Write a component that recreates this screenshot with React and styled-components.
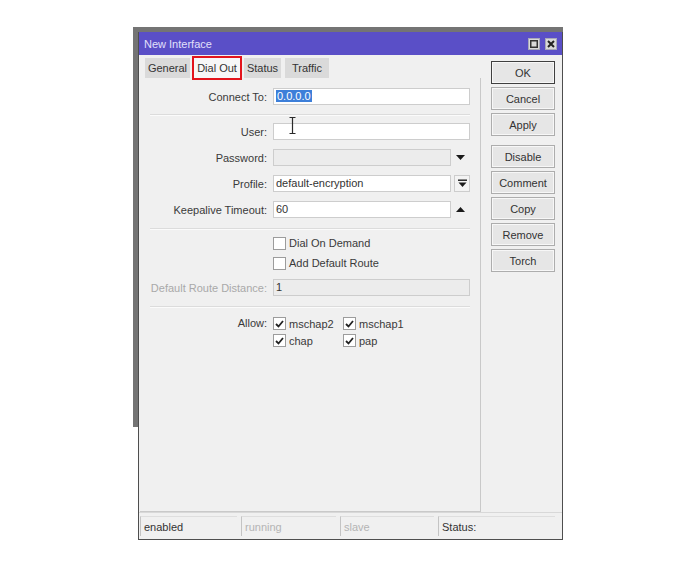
import styled, { createGlobalStyle } from "styled-components";

const GlobalStyle = createGlobalStyle`
  html, body {
    margin: 0;
    padding: 0;
    background: #fff;
  }
  body {
    font-family: "Liberation Sans", Arial, sans-serif;
    font-size: 11px;
    color: #333;
  }
`;

const Stage = styled.div`
  padding: 27px 0 0 133px;
`;

const Backdrop = styled.div`
  width: 430px;
  box-sizing: border-box;
  padding: 5px 0 0 5px;
  background: linear-gradient(#747474 0, #747474 400px, transparent 400px);
`;

const Window = styled.div`
  width: 425px;
  height: 508px;
  box-sizing: border-box;
  border: 1px solid #4e4e4e;
  border-top: none;
  background: #f0f0f0;
  display: flex;
  flex-direction: column;
`;

const TitleBar = styled.div`
  height: 23px;
  background: #5a4fc7;
  display: flex;
  align-items: center;
  padding: 0 5px 0 5px;
  color: #e2e0fb;
`;

const Title = styled.span`
  flex: 1;
`;

const TitleBtn = styled.span`
  width: 12px;
  height: 12px;
  box-sizing: border-box;
  margin-left: 5px;
  background: #d9d9d9;
  border: 1px solid #a8a8b8;
  display: flex;
  align-items: center;
  justify-content: center;
`;

const Body = styled.div`
  height: 457px;
  display: flex;
  padding-top: 3px;
  box-sizing: border-box;
`;

const Main = styled.div`
  width: 341px;
  margin-left: 1px;
  display: flex;
  flex-direction: column;
`;

const Tabs = styled.div`
  height: 20px;
  display: flex;
  gap: 4px;
  padding-left: 5px;
`;

const Tab = styled.div`
  width: ${(p) => p.$w}px;
  height: 20px;
  display: flex;
  align-items: center;
  justify-content: center;
  background: ${(p) => (p.$active ? "#f7f7f7" : "#dadada")};
  outline: ${(p) => (p.$active ? "2px solid #e3141c" : "none")};
  outline-offset: 0;
  color: #333;
`;

const Panel = styled.div`
  position: relative;
  flex: 1;
  display: flex;
  flex-direction: column;
  padding: 10px 0 0 10px;
  border-right: 1px solid #c9c9c9;
  border-bottom: 1px solid #c9c9c9;
`;

const Row = styled.div`
  display: grid;
  grid-template-columns: 117px 197px;
  column-gap: 6px;
  align-items: center;
  height: ${(p) => p.$h || 17}px;
  margin-top: ${(p) => p.$mt || 0}px;
`;

const Label = styled.span`
  text-align: right;
  white-space: nowrap;
  color: ${(p) => (p.$disabled ? "#a9a9a9" : "#3a3a3a")};
`;

const Input = styled.div`
  flex: 1;
  height: 17px;
  box-sizing: border-box;
  border: 1px solid #cdcdcd;
  background: ${(p) => (p.$disabled ? "#ececec" : "#fff")};
  padding: 0 2px;
  line-height: 15px;
  color: #333;
  white-space: nowrap;
  overflow: hidden;
`;

const Selected = styled.span`
  background: #3d7fd9;
  color: #fff;
  padding: 0 1px;
`;

const Combo = styled.div`
  display: flex;
  align-items: center;
`;

const ArrowSlot = styled.div`
  width: 19px;
  display: flex;
  justify-content: center;
  align-items: center;
`;

const DropBtn = styled.div`
  width: 16px;
  height: 17px;
  margin-left: 3px;
  box-sizing: border-box;
  border: 1px solid #cdcdcd;
  background: #f3f3f3;
  display: flex;
  align-items: center;
  justify-content: center;
`;

const Separator = styled.div`
  width: 320px;
  height: 1px;
  background: #dcdcdc;
  box-shadow: 0 1px 0 #fbfbfb;
  margin: ${(p) => p.$m};
`;

const Stack = styled.div`
  display: flex;
  flex-direction: column;
  gap: ${(p) => p.$gap}px;
`;

const CheckItem = styled.label`
  display: flex;
  align-items: center;
  gap: 3px;
  color: #3a3a3a;
  white-space: nowrap;
`;

const Box = styled.span`
  width: 13px;
  height: 13px;
  box-sizing: border-box;
  border: 1px solid #9c9c9c;
  background: #fff;
  display: inline-flex;
  align-items: center;
  justify-content: center;
`;

const Options = styled.div`
  display: grid;
  grid-template-columns: 70px 70px;
  grid-auto-rows: 17px;
  align-items: center;
`;

const AllowRow = styled.div`
  display: grid;
  grid-template-columns: 117px 197px;
  column-gap: 6px;
  align-items: start;
`;

const AllowLabel = styled(Label)`
  line-height: 17px;
`;

const Cursor = styled.svg`
  position: absolute;
  left: 149px;
  top: 39px;
`;

const Side = styled.div`
  width: 64px;
  margin-left: 10px;
  padding-top: 3px;
  display: flex;
  flex-direction: column;
  gap: 9px;
`;

const BtnGroup = styled.div`
  display: flex;
  flex-direction: column;
  gap: 3px;
`;

const Button = styled.div`
  height: 23px;
  box-sizing: border-box;
  border: 1px solid ${(p) => (p.$default ? "#3f3f3f" : "#adadad")};
  background: #e6e6e6;
  box-shadow: inset 0 0 0 1px #f7f7f7;
  display: flex;
  align-items: center;
  justify-content: center;
  color: #333;
`;

const StatusBar = styled.div`
  flex: 1;
  display: flex;
  gap: 4px;
  padding: 3px 6px 0 1px;
  border-top: 1px solid #d8d8d8;
`;

const Cell = styled.div`
  width: ${(p) => p.$w}px;
  height: 20px;
  box-sizing: border-box;
  border-left: 1px solid #c4c4c4;
  border-top: 1px solid #dedede;
  padding-left: 3px;
  display: flex;
  align-items: center;
  color: ${(p) => (p.$dim ? "#b4b4b4" : "#333")};
`;

const Check = () => (
  <svg width="9" height="8" viewBox="0 0 9 8">
    <path d="M1 4 L3.5 6.5 L8 1" stroke="#222" strokeWidth="1.8" fill="none" />
  </svg>
);

const Tri = ({ up }) => (
  <svg width="9" height="5" viewBox="0 0 9 5">
    <polygon points={up ? "0,5 9,5 4.5,0" : "0,0 9,0 4.5,5"} fill="#1a1a1a" />
  </svg>
);

const CheckBox = ({ checked, children }) => (
  <CheckItem>
    <Box>{checked && <Check />}</Box>
    {children}
  </CheckItem>
);

export default function App() {
  return (
    <Stage>
      <GlobalStyle />
      <Backdrop>
        <Window>
          <TitleBar>
            <Title>New Interface</Title>
            <TitleBtn>
              <svg width="8" height="8" viewBox="0 0 8 8">
                <rect x="0.75" y="0.75" width="6.5" height="6.5" fill="none" stroke="#333" strokeWidth="1.5" />
              </svg>
            </TitleBtn>
            <TitleBtn>
              <svg width="8" height="8" viewBox="0 0 8 8">
                <path d="M1 1 L7 7 M7 1 L1 7" stroke="#222" strokeWidth="2" />
              </svg>
            </TitleBtn>
          </TitleBar>
          <Body>
            <Main>
              <Tabs>
                <Tab $w={45}>General</Tab>
                <Tab $w={46} $active>Dial Out</Tab>
                <Tab $w={37}>Status</Tab>
                <Tab $w={44}>Traffic</Tab>
              </Tabs>
              <Panel>
                <Row>
                  <Label>Connect To:</Label>
                  <Input>
                    <Selected>0.0.0.0</Selected>
                  </Input>
                </Row>
                <Separator $m="9px 0 8px" />
                <Stack $gap={9}>
                  <Row>
                    <Label>User:</Label>
                    <Input />
                  </Row>
                  <Row>
                    <Label>Password:</Label>
                    <Combo>
                      <Input $disabled />
                      <ArrowSlot>
                        <Tri />
                      </ArrowSlot>
                    </Combo>
                  </Row>
                  <Row>
                    <Label>Profile:</Label>
                    <Combo>
                      <Input>default-encryption</Input>
                      <DropBtn>
                        <svg width="9" height="9" viewBox="0 0 9 9">
                          <rect x="0" y="0.5" width="9" height="1.4" fill="#1a1a1a" />
                          <polygon points="0.5,3.5 8.5,3.5 4.5,8" fill="#1a1a1a" />
                        </svg>
                      </DropBtn>
                    </Combo>
                  </Row>
                  <Row>
                    <Label>Keepalive Timeout:</Label>
                    <Combo>
                      <Input>60</Input>
                      <ArrowSlot>
                        <Tri up />
                      </ArrowSlot>
                    </Combo>
                  </Row>
                </Stack>
                <Separator $m="10px 0 6px" />
                <Stack $gap={4}>
                  <Row $h={16}>
                    <span />
                    <CheckBox>Dial On Demand</CheckBox>
                  </Row>
                  <Row $h={16}>
                    <span />
                    <CheckBox>Add Default Route</CheckBox>
                  </Row>
                </Stack>
                <Row $mt={8}>
                  <Label $disabled>Default Route Distance:</Label>
                  <Input $disabled>1</Input>
                </Row>
                <Separator $m="10px 0 8px" />
                <AllowRow>
                  <AllowLabel>Allow:</AllowLabel>
                  <Options>
                    <CheckBox checked>mschap2</CheckBox>
                    <CheckBox checked>mschap1</CheckBox>
                    <CheckBox checked>chap</CheckBox>
                    <CheckBox checked>pap</CheckBox>
                  </Options>
                </AllowRow>
                <Cursor width="7" height="17" viewBox="0 0 7 17">
                  <path d="M0.5 0.5 H6.5 M3.5 0.5 V16.5 M0.5 16.5 H6.5" stroke="#2a2a2a" strokeWidth="1.2" fill="none" />
                </Cursor>
              </Panel>
            </Main>
            <Side>
              <BtnGroup>
                <Button $default>OK</Button>
                <Button>Cancel</Button>
                <Button>Apply</Button>
              </BtnGroup>
              <BtnGroup>
                <Button>Disable</Button>
                <Button>Comment</Button>
                <Button>Copy</Button>
                <Button>Remove</Button>
                <Button>Torch</Button>
              </BtnGroup>
            </Side>
          </Body>
          <StatusBar>
            <Cell $w={97}>enabled</Cell>
            <Cell $w={95} $dim>running</Cell>
            <Cell $w={94} $dim>slave</Cell>
            <Cell $w={117}>Status:</Cell>
          </StatusBar>
        </Window>
      </Backdrop>
    </Stage>
  );
}
